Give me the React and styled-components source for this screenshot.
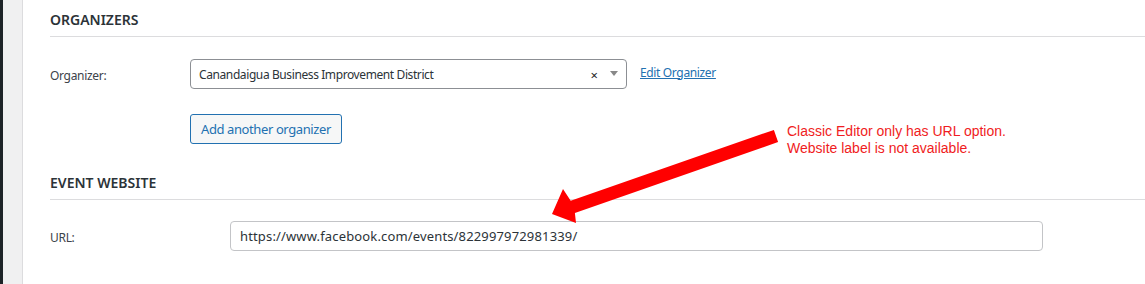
import React from 'react';
import styled, { createGlobalStyle } from 'styled-components';

const GlobalStyle = createGlobalStyle`
  html, body {
    margin: 0;
    padding: 0;
    background: #fff;
  }
  body {
    font-family: 'Noto Sans', 'Open Sans', sans-serif;
    font-size: 13px;
    color: #3c434a;
  }
`;

const Page = styled.div`
  position: relative;
  display: flex;
  width: 1145px;
  height: 284px;
  overflow: hidden;
  background: #fff;
`;

const AdminBar = styled.div`
  width: 3px;
  flex-shrink: 0;
  background: #1d2327;
`;

const Gutter = styled.div`
  width: 19px;
  flex-shrink: 0;
  background: #f0f0f1;
  border-right: 1px solid #dcdcde;
`;

const Main = styled.div`
  flex: 1;
  padding-left: 27px;
  display: flex;
  flex-direction: column;
`;

const SectionTitle = styled.h3`
  margin: 0;
  margin-top: ${(p) => p.$top || 0}px;
  padding: 13px 0 9px;
  margin-right: -40px;
  font-size: 14px;
  line-height: 14px;
  font-weight: 600;
  color: #2c3338;
  text-transform: uppercase;
  border-bottom: 1px solid #dcdcde;
`;

const Row = styled.div`
  display: flex;
  align-items: center;
  margin-top: ${(p) => p.$top}px;
`;

const Label = styled.label`
  width: ${(p) => p.$width}px;
  flex-shrink: 0;
  padding-top: 2px;
  font-size: 12px;
  letter-spacing: -0.3px;
  color: #3c434a;
`;

const Select = styled.div`
  width: 437px;
  height: 30px;
  box-sizing: border-box;
  border: 1px solid #8c8f94;
  border-radius: 4px;
  display: flex;
  align-items: center;
  padding: 1px 8px 0;
  color: #2c3338;
`;

const SelectValue = styled.span`
  flex: 1;
  font-size: 12px;
  letter-spacing: -0.4px;
`;

const Clear = styled.span`
  font-size: 13px;
  color: #1d2327;
  margin-right: 12px;
`;

const Caret = styled.span`
  width: 0;
  height: 0;
  border-left: 4px solid transparent;
  border-right: 4px solid transparent;
  border-top: 5px solid #888;
  margin-top: -3px;
`;

const EditLink = styled.a`
  margin-left: 13px;
  margin-top: -4px;
  font-size: 12px;
  letter-spacing: -0.35px;
  color: #2271b1;
  text-decoration: underline;
`;

const Button = styled.button`
  height: 30px;
  padding: 0 10px;
  font-family: inherit;
  font-size: 13px;
  letter-spacing: -0.4px;
  color: #2271b1;
  background: #f6f7f7;
  border: 1px solid #2271b1;
  border-radius: 3px;
`;

const TextInput = styled.div`
  width: 813px;
  height: 30px;
  box-sizing: border-box;
  border: 1px solid #c3c4c7;
  border-radius: 4px;
  display: flex;
  align-items: center;
  padding: 0 9px;
  font-size: 13px;
  letter-spacing: 0.15px;
  color: #2c3338;
`;

const Note = styled.div`
  position: absolute;
  left: 787px;
  top: 123px;
  font-family: 'Liberation Sans', Arial, sans-serif;
  font-size: 14px;
  line-height: 17px;
  color: #f01c22;
`;

const ArrowSvg = styled.svg`
  position: absolute;
  left: 0;
  top: 0;
  pointer-events: none;
`;

export default function App() {
  return (
    <>
      <GlobalStyle />
      <Page>
        <AdminBar />
        <Gutter />
        <Main>
          <SectionTitle>Organizers</SectionTitle>
          <Row $top={22}>
            <Label $width={140}>Organizer:</Label>
            <Select>
              <SelectValue>Canandaigua Business Improvement District</SelectValue>
              <Clear>×</Clear>
              <Caret />
            </Select>
            <EditLink href="#">Edit Organizer</EditLink>
          </Row>
          <Row $top={25}>
            <Label $width={140} />
            <Button>Add another organizer</Button>
          </Row>
          <SectionTitle $top={19}>Event Website</SectionTitle>
          <Row $top={21}>
            <Label $width={180}>URL:</Label>
            <TextInput>https://www.facebook.com/events/822997972981339/</TextInput>
          </Row>
        </Main>
        <ArrowSvg width="1145" height="284" viewBox="0 0 1145 284">
          <polygon
            fill="#f00"
            points="773.9,129.9 778.1,142.1 574.9,212.9 576,223 552,214 563,189 570.7,200.7"
          />
        </ArrowSvg>
        <Note>
          Classic Editor only has URL option.
          <br />
          Website label is not available.
        </Note>
      </Page>
    </>
  );
}
